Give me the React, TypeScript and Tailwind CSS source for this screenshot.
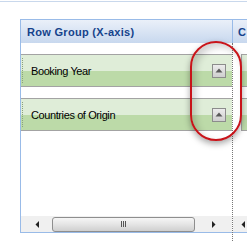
import React from "react";

const font = { fontFamily: "'Liberation Sans', Arial, sans-serif" };

function UpButton() {
  return (
    <div className="w-[14px] h-[14px] border border-[#8c8c8c] bg-gradient-to-b from-[#ececec] to-[#cfcfcf] flex items-center justify-center">
      <svg width="8" height="5" viewBox="0 0 8 5">
        <polygon points="4,0.5 7.5,4.5 0.5,4.5" fill="#5a5a5a" />
      </svg>
    </div>
  );
}

function Row({ label }: { label: string }) {
  return (
    <div className="h-[33px] border-t border-b border-[#a3a3a3] flex flex-col relative">
      <div className="h-[16px] bg-[#dfedd8]" />
      <div className="flex-1 bg-[#bcdaa8]" />
      <div className="absolute inset-0 flex items-center pl-[10px] pr-[6px]">
        <div className="absolute left-[1px] top-[3px] bottom-[3px] border-l border-dotted border-[#8aa07e]" />
        <span className="text-[11px] tracking-[-0.4px] text-black flex-1 leading-none pt-[1px]" style={font}>{label}</span>
        <UpButton />
      </div>
    </div>
  );
}

function Arrow({ dir }: { dir: "l" | "r" }) {
  return (
    <svg width="4" height="7" viewBox="0 0 4 7">
      {dir === "l" ? (
        <polygon points="4,0 4,7 0.5,3.5" fill="#222" />
      ) : (
        <polygon points="0,0 0,7 3.5,3.5" fill="#222" />
      )}
    </svg>
  );
}

export default function App() {
  return (
    <div className="w-[247px] h-[241px] bg-white relative overflow-hidden" style={font}>
      <div className="h-px mt-px bg-[#c9d8ec]" />
      <div className="flex mt-[17px] ml-[20px] h-[222px]">
        {/* column 1 */}
        <div className="w-[213px] h-[214px] border-l border-b border-[#99bbe8] flex flex-col">
          <div className="h-[24px] border-t border-[#99bbe8] bg-gradient-to-b from-[#eaf0f9] to-[#c8d8ee] flex items-center pl-[6px]">
            <span className="text-[11px] tracking-[0.3px] font-bold text-[#15428b] pt-[1px]" style={font}>Row Group (X-axis)</span>
          </div>
          <div className="h-[11px]" />
          <Row label="Booking Year" />
          <div className="h-[11px]" />
          <Row label="Countries of Origin" />
          <div className="flex-1" />
          <div className="h-[16px] bg-[#f0f0f0] flex items-center">
            <div className="w-[31px] flex items-center justify-center"><Arrow dir="l" /></div>
            <div className="w-[143px] h-[15px] rounded-[3px] border border-[#8e8e8e] bg-gradient-to-b from-[#f6f6f6] via-[#e4e4e4] to-[#cfcfcf] flex items-center justify-center gap-px">
              <div className="w-px h-[6px] bg-[#555]" />
              <div className="w-px h-[6px] bg-[#555]" />
              <div className="w-px h-[6px] bg-[#555]" />
            </div>
            <div className="flex-1 flex items-center justify-center"><Arrow dir="r" /></div>
          </div>
        </div>
        {/* separator */}
        <div className="w-px flex flex-col">
          <div className="h-[24px] bg-[#99bbe8]" />
          <div className="flex-1 border-l border-dotted border-[#777]" />
        </div>
        {/* column 2 */}
        <div className="w-[14px] h-[214px] border-b border-[#99bbe8] flex flex-col">
          <div className="h-[24px] border-t border-[#99bbe8] bg-gradient-to-b from-[#eaf0f9] to-[#c8d8ee] flex items-center pl-[5px]">
            <span className="text-[11px] font-bold text-[#15428b] pt-[1px]" style={font}>C</span>
          </div>
          <div className="h-[11px]" />
          <div className="h-[33px] ml-[8px] border-t border-b border-l border-[#a3a3a3] flex flex-col">
            <div className="h-[16px] bg-[#dfedd8]" />
            <div className="flex-1 bg-[#bcdaa8]" />
          </div>
          <div className="h-[11px]" />
          <div className="h-[33px] ml-[8px] border-t border-b border-l border-[#a3a3a3] flex flex-col">
            <div className="h-[16px] bg-[#dfedd8]" />
            <div className="flex-1 bg-[#bcdaa8]" />
          </div>
          <div className="flex-1" />
          <div className="h-[16px] bg-[#f0f0f0] flex items-center pl-[8px]">
            <Arrow dir="l" />
          </div>
        </div>
      </div>
      <div className="absolute left-[190px] top-[41px] w-[52px] h-[100px] rounded-full border-2 border-[#c8141a] shadow-[0_3px_6px_rgba(0,0,0,0.35),inset_4px_4px_7px_rgba(0,0,0,0.18)]" />
    </div>
  );
}
